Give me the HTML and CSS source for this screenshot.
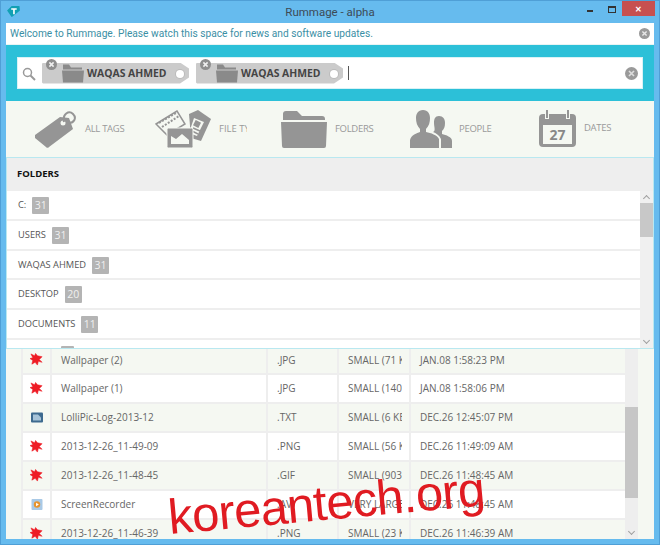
FILE: index.html
```html
<!DOCTYPE html>
<html lang="en">
<head>
<meta charset="utf-8">
<title>Rummage - alpha</title>
<link rel="stylesheet" href="styles.css">
</head>
<body>
<div class="window">
  <header class="titlebar">
    <svg class="app-logo" viewBox="0 0 14 12" width="13" height="11"><path d="M0 5L5 0h8.500L14 5l-8 6.500q-1 .8-1.500 0z" fill="#12a0b4"/><path d="M4.500 2.500h6v1.600H8.400V9H6.600V4.100H4.500z" fill="#fff"/></svg>
    <div class="title">Rummage - alpha</div>
    <div class="controls">
      <span class="min"></span>
      <span class="max"></span>
      <span class="close">✕</span>
    </div>
  </header>
  <main class="client">
    <div class="banner">
      <span>Welcome to Rummage. Please watch this space for news and software updates.</span>
      <svg class="x-ico small" viewBox="0 0 14 14"><circle cx="7" cy="7" r="7" fill="#9a9a9a"/><path d="M4.300 4.300l5.400 5.400M9.700 4.300l-5.400 5.400" stroke="#e8e8e8" stroke-width="1.800"/></svg>
    </div>
    <div class="searchwrap">
      <div class="searchbox">
        <svg class="lens" viewBox="0 0 14 14" width="14" height="14"><circle cx="5.500" cy="5.500" r="4" fill="none" stroke="#999" stroke-width="1.500"/><path d="M8.500 8.500l4.500 4.500" stroke="#999" stroke-width="2"/></svg>
        <div class="chip">
          <svg class="x-ico chip-x" viewBox="0 0 14 14"><circle cx="7" cy="7" r="7" fill="#8e8e8e"/><path d="M4.300 4.300l5.400 5.400M9.700 4.300l-5.400 5.400" stroke="#eee" stroke-width="2"/></svg>
          <svg class="chip-folder" viewBox="0 0 22 18" width="22" height="19"><path d="M1 0h6l2 3h11v2H1z" fill="#8a8a8a"/><path d="M0 6h22l-1 12H1z" fill="#8a8a8a"/></svg>
          <b>WAQAS AHMED</b>
          <i class="hole"></i>
        </div>
        <div class="chip">
          <svg class="x-ico chip-x" viewBox="0 0 14 14"><circle cx="7" cy="7" r="7" fill="#8e8e8e"/><path d="M4.300 4.300l5.400 5.400M9.700 4.300l-5.400 5.400" stroke="#eee" stroke-width="2"/></svg>
          <svg class="chip-folder" viewBox="0 0 22 18" width="22" height="19"><path d="M1 0h6l2 3h11v2H1z" fill="#8a8a8a"/><path d="M0 6h22l-1 12H1z" fill="#8a8a8a"/></svg>
          <b>WAQAS AHMED</b>
          <i class="hole"></i>
        </div>
        <span class="caret"></span>
        <svg class="x-ico clear" viewBox="0 0 14 14"><circle cx="7" cy="7" r="7" fill="#9a9a9a"/><path d="M4.300 4.300l5.400 5.400M9.700 4.300l-5.400 5.400" stroke="#ddd" stroke-width="1.800"/></svg>
      </div>
    </div>
    <nav class="filters">
      <div class="filter f-tags">
        <svg viewBox="0 0 44 38" width="44" height="38"><path d="M0 25L25 7l9 1 4 11-24 18a2 2 0 0 1-3 0L0 28z" fill="#959595"/><circle cx="28" cy="13" r="2.500" fill="#f5f8f2"/><path d="M29 12c-2-8 5-12 9-8s1 9-4 9" fill="none" stroke="#959595" stroke-width="2"/></svg>
        <span>ALL TAGS</span>
      </div>
      <div class="filter f-types">
        <svg viewBox="0 0 56 38" width="56" height="38"><path d="M1 14L22 1l8 13-18 11z" fill="#f5f8f2" stroke="#959595" stroke-width="1.500"/><path d="M4 13l17-10M7 17l17-11" stroke="#959595" stroke-width="2" stroke-dasharray="2 1.500"/><path d="M34 4l9-4 13 9-10 22-10-3z" fill="#959595"/><path d="M39 8l10 4-7 14-8-3z" fill="#f5f8f2"/><path d="M41 11l4 2-2 4-4-2zM38 18l7 3M37 21l6 3" stroke="#959595" stroke-width="1.500" fill="#959595"/><rect x="12" y="18" width="26" height="20" rx="1.500" fill="#959595" stroke="#f5f8f2"/><path d="M16 34v-8l5 3 6-5 7 6v4z" fill="#f5f8f2"/></svg>
        <span class="clip">FILE TYPES</span>
      </div>
      <div class="filter f-folders">
        <svg viewBox="0 0 46 38" width="46" height="38"><path d="M2 4q0-3 3-3h11l5 5h20q3 0 3 3v1H2z" fill="#959595"/><path d="M0 12h46l-1 24q0 2-2 2H3q-2 0-2-2z" fill="#959595"/></svg>
        <span>FOLDERS</span>
      </div>
      <div class="filter f-people">
        <svg viewBox="0 0 42 38" width="42" height="38"><path d="M13 0c5 0 7 4 7 8s-1 8-4 11v3c5 1 11 3 13 7v9H0v-8c1-5 7-7 10-8v-3C7 16 6 12 6 8s2-8 7-8z" fill="#959595"/><path d="M29 6c4 0 6 3 6 7s-1 6-3 8v3c4 1 10 3 10 7v7H31v-9c-2-4-5-6-8-7 3-1 1-5 1-9 0-4 1-7 5-7z" fill="#959595"/></svg>
        <span>PEOPLE</span>
      </div>
      <div class="filter f-dates">
        <div class="cal"><i class="ring r1"></i><i class="ring r2"></i><em>27</em></div>
        <span>DATES</span>
      </div>
    </nav>
    <section class="folders">
      <h2>FOLDERS</h2>
      <div class="listarea">
        <ul class="flist">
          <li>C: <i>31</i></li>
          <li>USERS <i>31</i></li>
          <li>WAQAS AHMED <i>31</i></li>
          <li>DESKTOP <i>20</i></li>
          <li>DOCUMENTS <i>11</i></li>
          <li class="cut"><span></span><i></i></li>
        </ul>
        <div class="sb">
          <span class="arr up"></span>
          <span class="thumb"></span>
          <span class="arr down"></span>
        </div>
      </div>
    </section>
    <section class="results">
      <table>
        <tbody>
          <tr class="alt first"><td class="ic"><svg class="splat" viewBox="0 0 14 14"><use href="#sp"/></svg></td><td class="nm">Wallpaper (2)</td><td class="ty">.JPG</td><td class="sz"><span>SMALL (71 KB)</span></td><td class="dt">JAN.08 1:58:23 PM</td></tr>
          <tr><td class="ic"><svg class="splat" viewBox="0 0 14 14"><use href="#sp"/></svg></td><td class="nm">Wallpaper (1)</td><td class="ty">.JPG</td><td class="sz"><span>SMALL (140 KB)</span></td><td class="dt">JAN.08 1:58:06 PM</td></tr>
          <tr class="alt"><td class="ic"><svg class="fi" viewBox="0 0 12 10"><rect width="12" height="10" rx="1" fill="#3d6a8f"/><path d="M2 2h5l3 3v3H2z" fill="#a6c3d8"/></svg></td><td class="nm">LolliPic-Log-2013-12</td><td class="ty">.TXT</td><td class="sz"><span>SMALL (6 KB)</span></td><td class="dt">DEC.26 12:45:07 PM</td></tr>
          <tr><td class="ic"><svg class="splat" viewBox="0 0 14 14"><use href="#sp"/></svg></td><td class="nm">2013-12-26_11-49-09</td><td class="ty">.PNG</td><td class="sz"><span>SMALL (56 KB)</span></td><td class="dt">DEC.26 11:49:09 AM</td></tr>
          <tr class="alt"><td class="ic"><svg class="splat" viewBox="0 0 14 14"><use href="#sp"/></svg></td><td class="nm">2013-12-26_11-48-45</td><td class="ty">.GIF</td><td class="sz"><span>SMALL (903 KB)</span></td><td class="dt">DEC.26 11:48:45 AM</td></tr>
          <tr><td class="ic"><svg class="fi" viewBox="0 0 12 12"><rect width="12" height="12" rx="1" fill="#a9c9e6"/><circle cx="6" cy="6" r="3.500" fill="#e8932b"/><path d="M5 4.200L8 6 5 7.800z" fill="#fff"/></svg></td><td class="nm">ScreenRecorder</td><td class="ty">.AVI</td><td class="sz"><span>VERY LARGE</span></td><td class="dt">DEC.26 11:48:45 AM</td></tr>
          <tr class="alt"><td class="ic"><svg class="splat" viewBox="0 0 14 14"><use href="#sp"/></svg></td><td class="nm">2013-12-26_11-46-39</td><td class="ty">.PNG</td><td class="sz"><span>SMALL (23 KB)</span></td><td class="dt">DEC.26 11:46:39 AM</td></tr>
        </tbody>
      </table>
      <div class="sb2">
        <span class="thumb2"></span>
        <span class="arr down"></span>
      </div>
    </section>
  </main>
</div>
<svg class="defs" width="0" height="0"><defs><path id="sp" fill="#ee1c25" stroke="#ee1c25" stroke-width=".6" d="M1 1l4 2L6 .5 8 3l5 1-3 3 3 3-4-1-1 4-2.500-3L2 12l1-4-3-2 3-1z"/></defs></svg>
<div class="watermark">koreantech.org</div>
</body>
</html>
```
FILE: styles.css
```css
* { box-sizing: border-box; }
html, body { margin: 0; padding: 0; }
body { width: 660px; height: 545px; overflow: hidden; position: relative; font-family: "Open Sans", "Liberation Sans", sans-serif; }
.defs { position: absolute; }
.window { width: 660px; height: 545px; background: #66bbee; padding: 0 6px 6px; display: flex; flex-direction: column; box-shadow: inset 0 0 0 1px #4f9fd6; }
.titlebar { height: 23px; flex: none; display: flex; align-items: center; position: relative; }
.app-logo { margin-left: 1px; margin-top: -1px; }
.title { position: absolute; left: 0; right: 0; top: 3px; text-align: center; font-size: 11.5px; line-height: 18px; color: #3d4a55; font-family: Roboto, sans-serif; }
.controls { position: absolute; right: -1px; top: 1px; display: flex; align-items: flex-start; }
.controls .min { width: 6px; height: 2px; background: #333; margin: 9px 15px 0 0; }
.controls .max { width: 8px; height: 7px; border: 1px solid #333; border-top-width: 2px; margin: 5px 6px 0 0; }
.controls .close { width: 33px; height: 15px; background: #c75050; color: #fff; font-size: 8px; line-height: 15px; text-align: center; font-weight: 700; }
.client { flex: 1; min-height: 0; background: #f5f8f2; display: flex; flex-direction: column; overflow: hidden; }
.banner { height: 22px; flex: none; background: #fff; display: flex; align-items: center; justify-content: space-between; padding: 0 4px; font-size: 10.2px; color: #3b8fa5; border-bottom: 1px solid #e8f4f4; font-family: Roboto, sans-serif; }
.x-ico { display: block; flex: none; }
.x-ico.small { width: 11px; height: 11px; }
.searchwrap { height: 56px; flex: none; background: #2cc0d8; padding: 12px 11px; }
.searchbox { height: 32px; background: #fff; display: flex; align-items: center; padding-left: 4px; border: 1px solid #d8f2f6; }
.lens { margin: 1px 6px 0 0; flex: none; }
.chip { position: relative; width: 147px; height: 21px; margin-right: 7px; display: flex; align-items: center; padding-left: 20px; flex: none; }
.chip::before { content: ""; position: absolute; inset: 0; background: #cbcbcb; clip-path: polygon(1px 0, 138px 0, 147px 6px, 147px 15px, 138px 21px, 1px 21px, 0 20px, 0 1px); }
.chip + .chip { margin-right: 5px; }
.chip-x { position: absolute; left: 4px; top: -4px; width: 11px; height: 11px; z-index: 1; }
.chip-folder { flex: none; margin-right: 3px; margin-top: 1px; position: relative; }
.chip b { font-size: 10.4px; color: #444; font-weight: 700; font-family: "Open Sans", sans-serif; white-space: nowrap; position: relative; }
.hole { position: absolute; right: 5px; top: 7px; width: 8px; height: 8px; border-radius: 50%; background: #fff; box-shadow: 0 0 0 1px #bbb; }
.caret { width: 1px; height: 14px; background: #555; flex: none; }
.clear { width: 13px; height: 13px; margin-left: auto; margin-right: 4px; }
.filters { height: 56px; flex: none; background: #f5f8f2; display: flex; align-items: flex-start; }
.filter { display: flex; align-items: center; color: #9a9a9a; font-size: 9.5px; padding-top: 9px; flex: none; white-space: nowrap; letter-spacing: -0.3px; font-family: "Open Sans", sans-serif; }
.filter svg { flex: none; display: block; }
.filter span { margin-bottom: 2px; }
.f-tags { width: 114px; padding-left: 29px; gap: 6px; }
.f-types { width: 127px; padding-left: 35px; gap: 8px; }
.f-folders { width: 135px; padding-left: 34px; gap: 8px; }
.f-people { width: 130px; padding-left: 28px; gap: 7px; }
.f-dates { padding-left: 27px; gap: 8px; }
.clip { width: 34px; overflow: hidden; display: block; letter-spacing: 0; }
.cal { width: 37px; height: 33px; background: #959595; border-radius: 4px; position: relative; margin-top: 4px; display: flex; justify-content: center; align-items: flex-end; padding-bottom: 3px; }
.cal em { display: block; width: 29px; height: 19px; background: #f5f8f2; font-style: normal; font-weight: 700; color: #888; font-size: 14px; line-height: 19px; letter-spacing: 0; text-align: center; }
.ring { position: absolute; top: -4px; width: 2px; height: 8px; background: #959595; box-shadow: 0 0 0 1px #f5f8f2; }
.r1 { left: 7px; }
.r2 { right: 7px; }
.folders { height: 192px; flex: none; background: #fff; border: 1px solid #b9e8f0; display: flex; flex-direction: column; z-index: 1; }
.folders h2 { margin: 0; height: 33px; flex: none; background: #eeeeee; font-size: 9.5px; line-height: 32px; padding-left: 10px; color: #111; font-weight: 700; font-family: "Open Sans", sans-serif; }
.listarea { flex: 1; min-height: 0; display: flex; }
.flist { list-style: none; margin: 0; padding: 0; flex: 1; min-width: 0; overflow: hidden; }
.flist li { height: 29.75px; border-bottom: 2px solid #eee; font-size: 9.3px; color: #555; padding: 5px 0 0 11px; line-height: 18px; white-space: nowrap; display: flex; align-items: flex-start; gap: 6px; }
.flist li i { display: block; width: 17px; height: 17px; background: #b4b4b4; color: #f0f0f0; font-style: normal; margin-top: 1px; line-height: 17px; font-size: 10.5px; text-align: center; font-weight: 400; border-radius: 1px; }
.flist .cut { padding-top: 6px; height: 13px; border-bottom: 0; overflow: hidden; }
.flist .cut span { display: block; width: 37px; }
.flist .cut i { width: 13px; margin-top: 0; }
.sb { width: 13px; flex: none; background: #f0f0f0; display: flex; flex-direction: column; }
.arr { height: 12px; flex: none; display: block; position: relative; }
.arr::after { content: ""; position: absolute; left: 4px; width: 4px; height: 4px; border: solid #a0a0a0; border-width: 1px 0 0 1px; transform: rotate(45deg); top: 5px; }
.arr.down::after { transform: rotate(225deg); top: 2px; }
.thumb { height: 34px; background: #c8c8c8; flex: none; }
.sb .down { margin-top: auto; }
.results { flex: 1; min-height: 0; display: flex; padding: 0 15px; background: #f5f8f2; overflow: hidden; }
.results table { width: 604px; flex: none; border-collapse: collapse; table-layout: fixed; border-left: 2px solid #eee; align-self: flex-start; }
.results td { height: 29px; padding: 0 0 1px 9px; border-bottom: 2px solid #eee; border-right: 2px solid #eee; background: #fff; font-size: 10px; color: #666; white-space: nowrap; overflow: hidden; font-family: "Open Sans", sans-serif; }
.results tr.alt td { background: #f5f8f2; }
.results tr.first td { height: 25px; padding-bottom: 3px; }
.results td.ic { width: 29px; padding: 0 0 0 7px; }
.results td.nm { width: 216px; }
.results td.ty { width: 71px; }
.results td.sz { width: 72px; }
.results td.sz span { display: block; width: 54px; overflow: hidden; }
.results td.dt { border-right: 0; }
.splat { display: block; width: 13px; height: 13px; }
.fi { display: block; width: 12px; height: 11px; margin-left: 1px; }
.sb2 { width: 13px; flex: none; background: #eeeeee; display: flex; flex-direction: column; }
.thumb2 { height: 91px; background: #c6c6c6; margin-top: 58px; flex: none; }
.sb2 .down { margin-top: auto; }
.watermark { position: absolute; left: 171px; top: 487px; font-family: "Liberation Sans", sans-serif; font-size: 49px; letter-spacing: -0.7px; line-height: 60px; color: #e01b22; transform: rotate(-5.2deg); white-space: nowrap; transform-origin: left bottom; }
```
